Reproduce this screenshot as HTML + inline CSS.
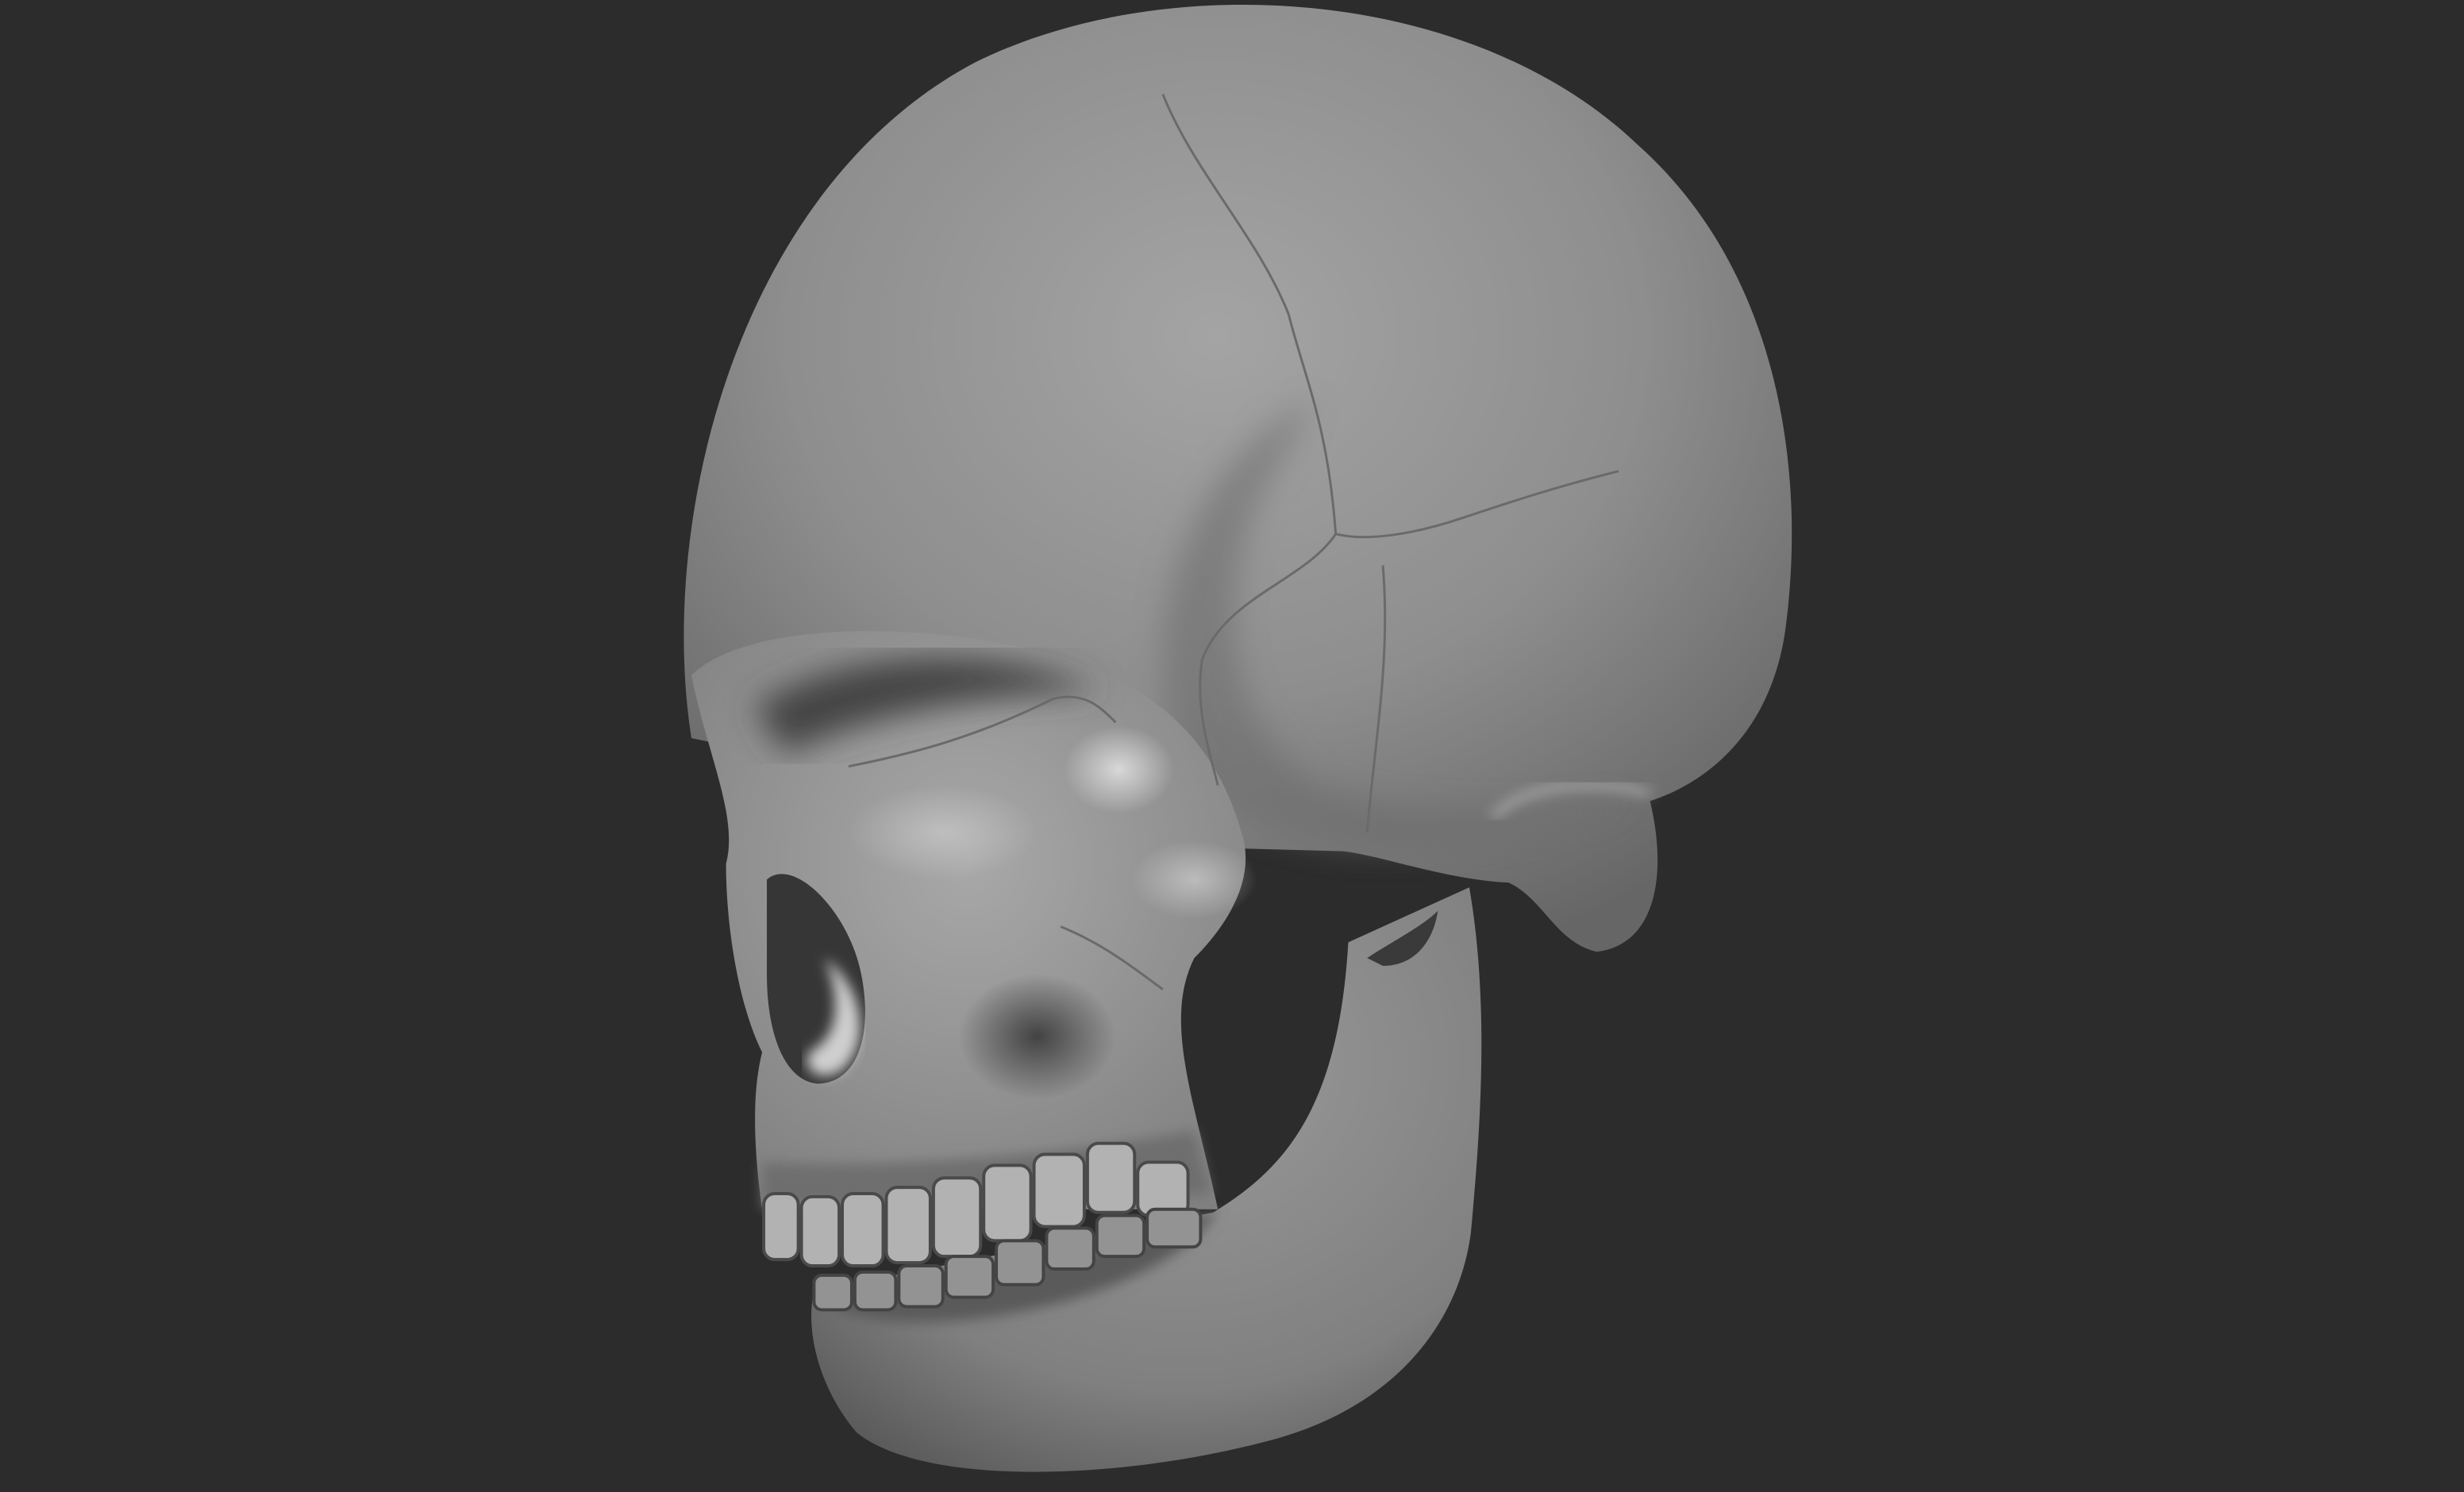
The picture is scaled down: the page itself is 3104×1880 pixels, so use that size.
<!DOCTYPE html>
<html><head><meta charset="utf-8"><style>
html,body{margin:0;padding:0;background:#2c2c2c;overflow:hidden}
svg{display:block;width:3104px;height:1880px}
</style></head><body>
<svg viewBox="0 0 1568 950" preserveAspectRatio="none" xmlns="http://www.w3.org/2000/svg">
<defs>
<radialGradient id="cr" cx="0.48" cy="0.35" r="0.7">
<stop offset="0" stop-color="#a4a4a4"/><stop offset="0.55" stop-color="#8e8e8e"/><stop offset="1" stop-color="#666"/></radialGradient>
<radialGradient id="md" cx="0.55" cy="0.3" r="0.8">
<stop offset="0" stop-color="#9a9a9a"/><stop offset="0.7" stop-color="#808080"/><stop offset="1" stop-color="#5a5a5a"/></radialGradient>
<radialGradient id="fc" cx="0.5" cy="0.4" r="0.7">
<stop offset="0" stop-color="#a8a8a8"/><stop offset="1" stop-color="#808080"/></radialGradient>
<radialGradient id="hl" cx="0.5" cy="0.5" r="0.5">
<stop offset="0" stop-color="#d8d8d8"/><stop offset="1" stop-color="#d8d8d8" stop-opacity="0"/></radialGradient>
<radialGradient id="sh" cx="0.5" cy="0.5" r="0.5">
<stop offset="0" stop-color="#2e2e2e"/><stop offset="1" stop-color="#2e2e2e" stop-opacity="0"/></radialGradient>
<filter id="b4"><feGaussianBlur stdDeviation="4"/></filter>
<filter id="b10"><feGaussianBlur stdDeviation="10"/></filter>
</defs>
<rect width="1568" height="950" fill="#2c2c2c"/>
<path d="M858,600 L935,565 C948,640 942,720 936,785 C928,845 885,898 805,918 C705,944 585,945 545,912 C522,885 512,848 518,822 L772,772 C822,742 852,700 858,600 Z" fill="url(#md)"/>
<path d="M520,825 C600,810 700,800 775,770 C760,800 700,830 620,840 C570,845 535,840 520,825Z" fill="#5a5a5a" filter="url(#b4)"/>
<path d="M870,610 C885,600 905,590 915,580 C912,600 900,615 880,615Z" fill="#3a3a3a"/>
<path d="M440,470 C418,330 470,120 620,40 C740,-20 935,-10 1042,92 C1132,172 1150,300 1136,402 C1126,470 1082,500 1050,510 C1062,560 1052,602 1016,606 C990,600 982,572 960,562 C920,560 880,545 855,542 L780,540 Z" fill="url(#cr)"/>
<path d="M835,255 C770,290 735,360 740,440 C745,500 780,530 860,540 C950,545 1030,510 1050,505 C1000,520 900,525 840,500 C790,470 770,400 800,320 C815,290 830,270 835,255Z" fill="#6a6a6a" opacity="0.55" filter="url(#b10)"/>
<path d="M1050,505 C1010,495 970,500 950,520" stroke="#b0b0b0" stroke-width="4" fill="none" filter="url(#b4)"/>
<path d="M440,430 C470,400 560,395 640,410 C720,425 770,460 790,530 C800,560 780,590 760,610 C740,650 760,700 775,770 L485,770 C478,720 480,690 485,670 C470,640 462,590 462,550 C470,520 450,480 440,430Z" fill="url(#fc)"/>
<path d="M480,450 C540,410 640,410 700,440 C650,440 560,450 500,480Z" fill="#444" filter="url(#b10)"/>
<ellipse cx="712" cy="490" rx="35" ry="28" fill="url(#hl)"/>
<ellipse cx="600" cy="530" rx="60" ry="30" fill="url(#hl)" opacity="0.5"/>
<ellipse cx="660" cy="660" rx="50" ry="40" fill="url(#sh)" opacity="0.8"/>
<ellipse cx="760" cy="560" rx="40" ry="25" fill="url(#hl)" opacity="0.6"/>
<path d="M488,560 C505,545 540,580 548,620 C556,660 545,690 520,690 C500,688 488,660 488,620Z" fill="#363636"/>
<path d="M525,610 C550,630 555,665 535,682 C520,690 510,680 515,670 C535,660 535,635 525,610Z" fill="#cfcfcf" filter="url(#b4)"/>
<path d="M485,740 C560,745 680,735 760,720 L770,760 L485,770Z" fill="#6e6e6e" filter="url(#b4)"/>
<g fill="#b2b2b2" stroke="#4a4a4a" stroke-width="2">
<rect x="486" y="760" width="22" height="42" rx="7"/>
<rect x="510" y="762" width="24" height="44" rx="7"/>
<rect x="536" y="760" width="26" height="46" rx="7"/>
<rect x="564" y="756" width="28" height="48" rx="7"/>
<rect x="594" y="750" width="30" height="50" rx="7"/>
<rect x="626" y="742" width="30" height="48" rx="7"/>
<rect x="658" y="735" width="32" height="46" rx="7"/>
<rect x="692" y="728" width="30" height="44" rx="7"/>
<rect x="724" y="740" width="32" height="34" rx="7"/>
</g>
<g fill="#939393" stroke="#444" stroke-width="2">
<rect x="518" y="812" width="24" height="22" rx="5"/>
<rect x="544" y="810" width="26" height="24" rx="5"/>
<rect x="572" y="806" width="28" height="26" rx="5"/>
<rect x="602" y="800" width="30" height="26" rx="5"/>
<rect x="634" y="790" width="30" height="28" rx="5"/>
<rect x="666" y="782" width="30" height="26" rx="5"/>
<rect x="698" y="774" width="30" height="26" rx="5"/>
<rect x="730" y="770" width="34" height="24" rx="5"/>
</g>
<g stroke="#6a6a6a" stroke-width="1.5" fill="none">
<path d="M740,60 C760,110 800,150 820,200 C830,240 845,270 850,340 C870,345 900,340 930,330 C960,320 990,310 1030,300"/>
<path d="M850,340 C830,370 780,380 765,420 C760,450 770,480 775,500"/>
<path d="M880,360 C885,420 875,470 870,530"/>
<path d="M540,488 C580,480 620,470 670,445 C690,440 700,450 710,460"/>
<path d="M675,590 C700,600 720,615 740,630"/>
</g>
</svg>
</body></html>
